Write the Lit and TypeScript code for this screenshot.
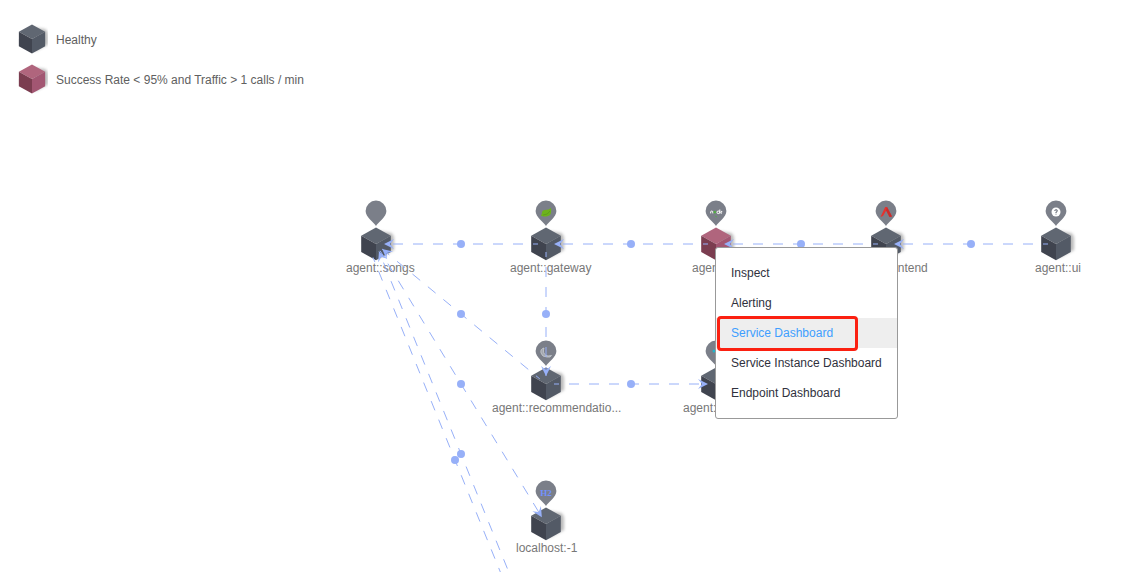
import { LitElement, html, svg, css } from "lit";
import { customElement, property, state } from "lit/decorators.js";

type Badge = "none" | "spring" | "node" | "angular" | "unknown" | "flask" | "h2" | "dot";

interface ServiceNode {
  id: string;
  label: string;
  x: number;
  y: number;
  badge: Badge;
  failing?: boolean;
}

interface Call {
  from: string;
  to: string;
  shift?: number;
}

const NODES: ServiceNode[] = [
  { id: "songs", label: "agent::songs", x: 376, y: 244, badge: "none" },
  { id: "gateway", label: "agent::gateway", x: 546, y: 244, badge: "spring" },
  { id: "app", label: "agent::app", x: 716, y: 244, badge: "node", failing: true },
  { id: "frontend", label: "agent::frontend", x: 886, y: 244, badge: "angular" },
  { id: "ui", label: "agent::ui", x: 1056, y: 244, badge: "unknown" },
  { id: "recommendation", label: "agent::recommendatio...", x: 546, y: 384, badge: "flask" },
  { id: "rating", label: "agent::rating", x: 716, y: 384, badge: "dot" },
  { id: "localhost", label: "localhost:-1", x: 546, y: 524, badge: "h2" },
  { id: "database", label: "", x: 546, y: 664, badge: "none" },
];

const CALLS: Call[] = [
  { from: "gateway", to: "songs" },
  { from: "app", to: "gateway" },
  { from: "frontend", to: "app" },
  { from: "ui", to: "frontend" },
  { from: "gateway", to: "recommendation" },
  { from: "recommendation", to: "songs" },
  { from: "recommendation", to: "rating" },
  { from: "songs", to: "localhost" },
  { from: "database", to: "songs" },
  { from: "songs", to: "database", shift: 6 },
];

const MENU = ["Inspect", "Alerting", "Service Dashboard", "Service Instance Dashboard", "Endpoint Dashboard"];

/* Isometric cube centred on the origin. */
const cube = (failing = false) => {
  const [top, left, right] = failing ? ["#b0657d", "#7b3d50", "#a25672"] : ["#606772", "#40444f", "#535a66"];
  return svg`
    <path d="M2 -13 L15 -11 Q18 -9 18 -5 V6 L3 14 Z" fill="#777" opacity=".5" filter="url(#soft)"></path>
    <path d="M0 -16.500 L14.800 -8.300 L0 0 L-14.800 -8.300 Z" fill=${top}></path>
    <path d="M-14.800 -8.300 L0 0 V16.300 L-14.800 8 Z" fill=${left}></path>
    <path d="M14.800 -8.300 L0 0 V16.300 L14.800 8 Z" fill=${right}></path>`;
};

const softFilter = svg`
  <filter id="soft" x="-40%" y="-40%" width="180%" height="180%">
    <feGaussianBlur stdDeviation="1.800"></feGaussianBlur>
  </filter>`;

/* Glyph inside the pin, centred on the pin's round head. */
const badge = (kind: Badge) => {
  switch (kind) {
    case "spring":
      return svg`<path d="M-4 1 Q-4 -2 -1 -2 Q3 -2 5 -4 Q6 3 2 4 Q-1 5 -4 4 L-5 4 Z" fill="#6db31b"></path>
        <path d="M-3 3 Q2 3 4 -1" fill="none" stroke="#548f20" stroke-width=".6"></path>`;
    case "node":
      return svg`<path d="M-5.300 1.400 V-.4 Q-4 -1.700 -3.200 -.4 V1.400 M3.800 -2.500 V1.500 M5.800 1.200 H4.900 Q4.600 -1 5.800 -.7 V.2" fill="none" stroke="#fff" stroke-width="1"></path>
        <path d="M-1.300 -1.300 L0 -.8 V1 L-1.300 1.600 L-2.500 1 V-.5 Z" fill="#54ad47"></path>
        <circle cx="2.300" cy=".3" r="1.300" fill="none" stroke="#fff" stroke-width="1"></circle>
        <path d="M-1 4 L1 5" stroke="#54ad47" stroke-width=".8"></path>`;
    case "angular":
      return svg`<path d="M-5.500 5 L-.8 -5 L1 -5 L6 4.500 L3.500 5 L.2 -1.500 L-3 4 Z" fill="#e4322f"></path>
        <path d="M1 -5 L6 4.500 L3.500 5 L.2 -1.500 Z" fill="#c92d2d"></path>`;
    case "unknown":
      return svg`<circle r="4.500" fill="#fff"></circle>
        <path d="M-1.300 -1 Q-1 -2.400 .3 -2.200 Q1.800 -1.700 .8 -.4 L0 .4 V1 M0 1.800 V2.600" fill="none" stroke="#666b76" stroke-width="1.100"></path>`;
    case "flask":
      return svg`<path d="M-2 -4 Q-6 -3 -5 1 Q-4 5 1 5 L4 5 L5.500 3.500 L2 4 Q-3 3 -2.500 -2 Z" fill="#a4a8b0" stroke="#c8cbd1" stroke-width=".8"></path>`;
    case "h2":
      return svg`<text class="h2" x="0" y="4" text-anchor="middle">H2</text>`;
    case "dot":
      return svg`<circle cx="-2" cy="-1" r="1.500" fill="#20b4cc"></circle>`;
    default:
      return null;
  }
};

@customElement("topology-graph")
export class TopologyGraph extends LitElement {
  @property({ attribute: false }) nodes: ServiceNode[] = [];
  @property({ attribute: false }) calls: Call[] = [];

  static styles = css`
    :host {
      display: block;
      min-width: 0;
      overflow: hidden;
    }
    .canvas {
      display: block;
      width: 100%;
      height: 100%;
    }
    .label {
      font: 12px "Liberation Sans", Arial, sans-serif;
      fill: #777;
    }
    .h2 {
      font: bold 9px "Liberation Serif", serif;
      fill: #7291ff;
    }
    .call {
      fill: none;
      stroke: #97b0f8;
      stroke-width: 1;
      stroke-dasharray: 10 10;
      stroke-dashoffset: 5;
    }
    .anchor,
    .arrow {
      fill: #97b0f8;
    }
    .pin {
      fill: #7b7f89;
    }
  `;

  private renderNode(n: ServiceNode) {
    return svg`
      <g transform="translate(${n.x} ${n.y})">
        ${cube(n.failing)}
        <path class="pin" d="M0 -18 C-2 -22 -10.400 -26.500 -10.400 -33 A10.400 10.400 0 0 1 10.400 -33 C10.400 -26.500 2 -22 0 -18 Z"></path>
        <g transform="translate(0 -32)">${badge(n.badge)}</g>
        <text class="label" x=${6 - Math.min(n.label.length, 20) * 3} y="28">${n.label}</text>
      </g>`;
  }

  private renderCall(c: Call) {
    const a = this.nodes.find((n) => n.id === c.from)!;
    const b = this.nodes.find((n) => n.id === c.to)!;
    const s = c.shift ?? 0;
    const len = Math.hypot(b.x - a.x, b.y - a.y);
    const dx = ((b.x - a.x) / len) * 8;
    const dy = ((b.y - a.y) / len) * 8;
    return svg`
      <path class="call" marker-end="url(#arrow)"
        d="M${a.x + dx - s} ${a.y + dy + s} L${b.x - dx - s} ${b.y - dy + s}"></path>
      <circle class="anchor" r="4" cx=${(a.x + b.x) / 2 - s} cy=${(a.y + b.y) / 2 + s}></circle>`;
  }

  render() {
    return html`
      <svg class="canvas" role="img" aria-label="Service topology">
        <defs>
          ${softFilter}
          <marker id="arrow" markerUnits="userSpaceOnUse" markerWidth="12" markerHeight="12"
            refX="10" refY="5" orient="auto">
            <path class="arrow" d="M0 0 L10 5 L0 10 L4 5 Z"></path>
          </marker>
        </defs>
        ${this.nodes.map((n) => this.renderNode(n))}
        ${this.calls.map((c) => this.renderCall(c))}
      </svg>`;
  }
}

@customElement("topology-legend")
export class TopologyLegend extends LitElement {
  static styles = css`
    :host {
      display: block;
    }
    .list {
      display: grid;
      margin: 0;
      padding: 20px 16px;
      list-style: none;
    }
    .entry {
      display: flex;
      align-items: center;
      gap: 8px;
      height: 40px;
      font: 12px "Liberation Sans", Arial, sans-serif;
      color: #606060;
    }
    .icon {
      width: 32px;
      height: 32px;
    }
  `;

  private entry(text: string, failing: boolean) {
    return html`
      <li class="entry">
        <svg class="icon" viewBox="-18 -17 36 36" aria-hidden="true">
          <defs>${softFilter}</defs>
          ${cube(failing)}
        </svg>
        <span>${text}</span>
      </li>`;
  }

  render() {
    return html`
      <ul class="list">
        ${this.entry("Healthy", false)}
        ${this.entry("Success Rate < 95% and Traffic > 1 calls / min", true)}
      </ul>`;
  }
}

@customElement("context-menu")
export class ContextMenu extends LitElement {
  @property({ attribute: false }) items: string[] = [];
  @state() private active = "Service Dashboard";

  static styles = css`
    :host {
      display: block;
    }
    .menu {
      position: relative;
      display: grid;
      padding: 10px 0;
      background: #fff;
      border: 1px solid #999;
      border-radius: 3px;
    }
    .item {
      height: 30px;
      padding: 0 15px;
      border: 0;
      background: none;
      font: 12px "Liberation Sans", Arial, sans-serif;
      color: #30313d;
      text-align: left;
      white-space: nowrap;
      cursor: pointer;
    }
    .item.active {
      background: #eee;
      color: #409eff;
    }
    .outline {
      position: absolute;
      top: 68px;
      left: 1px;
      width: 141px;
      height: 35px;
      box-sizing: border-box;
      border: 3px solid #fb2011;
      border-radius: 4px;
      pointer-events: none;
    }
  `;

  render() {
    return html`
      <div class="menu" role="menu">
        ${this.items.map(
          (item) => html`
            <button
              class=${item === this.active ? "item active" : "item"}
              role="menuitem"
              @mouseenter=${() => (this.active = item)}
            >${item}</button>`,
        )}
        <div class="outline"></div>
      </div>`;
  }
}

@customElement("app-root")
export class AppRoot extends LitElement {
  static styles = css`
    :host {
      position: relative;
      display: grid;
      height: 100vh;
      overflow: hidden;
      background: #fff;
    }
    .graph,
    .legend {
      grid-area: 1 / 1;
    }
    .legend {
      place-self: start;
    }
    .popup {
      position: absolute;
      top: 247px;
      left: 715px;
    }
  `;

  render() {
    return html`
      <topology-graph class="graph" .nodes=${NODES} .calls=${CALLS}></topology-graph>
      <topology-legend class="legend"></topology-legend>
      <context-menu class="popup" .items=${MENU}></context-menu>`;
  }
}
